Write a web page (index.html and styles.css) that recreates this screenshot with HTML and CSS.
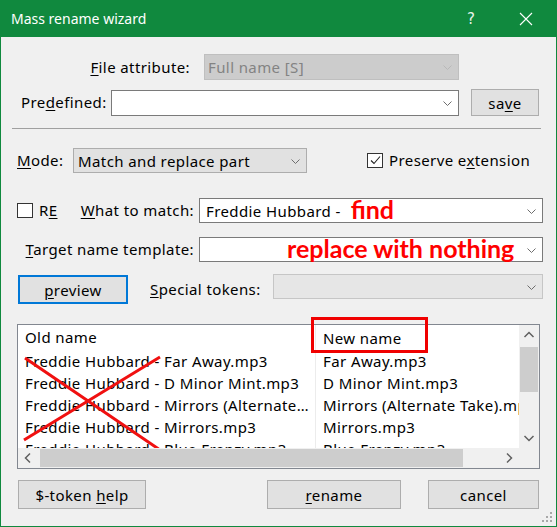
FILE: index.html
```html
<!DOCTYPE html>
<html>
<head>
<meta charset="utf-8">
<link rel="stylesheet" href="styles.css">
</head>
<body>
<div class="window">
  <div class="titlebar">
    <span class="title">Mass rename wizard</span>
    <span class="help">?</span>
    <span class="close"><svg width="14" height="14" viewBox="0 0 14 14"><path d="M1 1 L13 13 M13 1 L1 13" stroke="#fff" stroke-width="1.1" fill="none"/></svg></span>
  </div>

  <div class="row row-file">
    <span class="lbl lbl-file"><u>F</u>ile attribute:</span>
    <div class="combo combo-disabled w-file"><span class="ctext">Full name [S]</span><svg class="chev" width="9" height="5" viewBox="0 0 9 5"><path d="M0.5 0.5 L4.5 4.5 L8.5 0.5" fill="none" stroke="#b8b8b8"/></svg></div>
  </div>

  <div class="row row-pre">
    <span class="lbl lbl-pre">Pre<u>d</u>efined:</span>
    <div class="combo combo-edit w-pre"><span class="ctext"></span><svg class="chev" width="9" height="5" viewBox="0 0 9 5"><path d="M0.5 0.5 L4.5 4.5 L8.5 0.5" fill="none" stroke="#6d6d6d"/></svg></div>
    <div class="btn btn-save"><span>sa<u>v</u>e</span></div>
  </div>

  <div class="sep"></div>

  <div class="row row-mode">
    <span class="lbl lbl-mode"><u>M</u>ode:</span>
    <div class="combo combo-list w-mode"><span class="ctext">Match and replace part</span><svg class="chev" width="9" height="5" viewBox="0 0 9 5"><path d="M0.5 0.5 L4.5 4.5 L8.5 0.5" fill="none" stroke="#6d6d6d"/></svg></div>
    <span class="check check-pres"><svg width="13" height="13" viewBox="0 0 13 13"><path d="M2 6.5 L5 9.5 L11 2.5" fill="none" stroke="#222" stroke-width="1.1"/></svg></span>
    <span class="lbl lbl-pres">Preserve e<u>x</u>tension</span>
  </div>

  <div class="row row-match">
    <span class="check check-re"></span>
    <span class="lbl lbl-re">R<u>E</u></span>
    <span class="lbl lbl-what"><u>W</u>hat to match:</span>
    <div class="combo combo-edit w-long"><span class="ctext">Freddie Hubbard -</span><span class="note note-find">find</span><svg class="chev" width="9" height="5" viewBox="0 0 9 5"><path d="M0.5 0.5 L4.5 4.5 L8.5 0.5" fill="none" stroke="#6d6d6d"/></svg></div>
  </div>

  <div class="row row-target">
    <span class="lbl lbl-target"><u>T</u>arget name template:</span>
    <div class="combo combo-edit w-long"><span class="note note-replace">replace with nothing</span><svg class="chev" width="9" height="5" viewBox="0 0 9 5"><path d="M0.5 0.5 L4.5 4.5 L8.5 0.5" fill="none" stroke="#6d6d6d"/></svg></div>
  </div>

  <div class="row row-preview">
    <div class="btn btn-preview"><span><u>p</u>review</span></div>
    <span class="lbl lbl-special"><u>S</u>pecial tokens:</span>
    <div class="combo combo-off w-special"><span class="ctext"></span><svg class="chev" width="9" height="5" viewBox="0 0 9 5"><path d="M0.5 0.5 L4.5 4.5 L8.5 0.5" fill="none" stroke="#6d6d6d"/></svg></div>
  </div>

  <div class="list">
    <div class="list-content">
      <div class="lrow lhead"><span class="c1">Old name</span><span class="c2">New name</span></div>
      <div class="lrow"><span class="c1">Freddie Hubbard - Far Away.mp3</span><span class="c2">Far Away.mp3</span></div>
      <div class="lrow"><span class="c1">Freddie Hubbard - D Minor Mint.mp3</span><span class="c2">D Minor Mint.mp3</span></div>
      <div class="lrow"><span class="c1">Freddie Hubbard - Mirrors (Alternate Take).mp3</span><span class="c2">Mirrors (Alternate Take).mp3</span></div>
      <div class="lrow"><span class="c1">Freddie Hubbard - Mirrors.mp3</span><span class="c2">Mirrors.mp3</span></div>
      <div class="lrow"><span class="c1">Freddie Hubbard - Blue Frenzy.mp3</span><span class="c2">Blue Frenzy.mp3</span></div>
      <svg class="xmark" width="160" height="130" viewBox="0 0 160 130"><path d="M7 33 L145 127 M142 32 L6 115" stroke="#f01010" stroke-width="3" fill="none"/></svg>
    </div>
    <div class="vscroll">
      <svg class="arr" width="20" height="20" viewBox="0 0 20 20"><path d="M5.5 12 L10 7.5 L14.5 12" fill="none" stroke="#606060" stroke-width="1.5"/></svg>
      <div class="vtrack"><div class="vthumb"></div></div>
      <svg class="arr" width="20" height="20" viewBox="0 0 20 20"><path d="M5.5 8 L10 12.5 L14.5 8" fill="none" stroke="#606060" stroke-width="1.5"/></svg>
    </div>
    <div class="hscroll">
      <svg class="arr" width="20" height="20" viewBox="0 0 20 20"><path d="M12 5.5 L7.5 10 L12 14.5" fill="none" stroke="#606060" stroke-width="1.5"/></svg>
      <div class="htrack"><div class="hthumb"></div></div>
      <svg class="arr" width="20" height="20" viewBox="0 0 20 20"><path d="M8 5.5 L12.5 10 L8 14.5" fill="none" stroke="#606060" stroke-width="1.5"/></svg>
    </div>
    <div class="corner"></div>
    <div class="newname-box"></div>
  </div>

  <div class="row row-buttons">
    <div class="btn btn-help"><span>$-token <u>h</u>elp</span></div>
    <div class="btn btn-rename"><span><u>r</u>ename</span></div>
    <div class="btn btn-cancel"><span>cancel</span></div>
  </div>

  <svg class="grip" width="11" height="11" viewBox="0 0 11 11"><g fill="#a8a8a8"><rect x="8" y="0" width="2" height="2"/><rect x="4" y="4" width="2" height="2"/><rect x="8" y="4" width="2" height="2"/><rect x="0" y="8" width="2" height="2"/><rect x="4" y="8" width="2" height="2"/><rect x="8" y="8" width="2" height="2"/></g></svg>
</div>
</body>
</html>
```

FILE: styles.css
```css
* { box-sizing: border-box; }
html, body { margin: 0; padding: 0; }
body {
  font-family: "Noto Sans", "Open Sans", sans-serif;
  font-size: 15px;
  letter-spacing: 0.4px;
  color: #000;
  background: #f0f0f0;
}
u { text-decoration: underline; text-underline-offset: 2px; text-decoration-thickness: 1px; }

.window {
  position: relative;
  width: 557px;
  height: 527px;
  background: #f0f0f0;
  border: 1px solid #10893e;
  border-top: none;
}

.titlebar {
  height: 37px;
  margin: 0 -1px;
  background: #10893e;
  color: #fff;
  display: flex;
  align-items: center;
  padding-left: 11px;
  letter-spacing: 0;
}
.title { flex: 1; line-height: 1; font-size: 14px; }
.help { font-family: "DejaVu Sans", sans-serif; font-size: 15px; width: 16px; margin-right: 36px; color: #e8f3ec; }
.close { width: 14px; margin-right: 24px; display: flex; }

.row { display: flex; align-items: center; }
.lbl { white-space: nowrap; line-height: 1; }

.combo {
  position: relative;
  display: flex;
  align-items: center;
  height: 26px;
  border: 1px solid #7a7a7a;
  background: #fff;
  white-space: nowrap;
}
.combo .ctext { padding-left: 6px; }
.combo .chev { position: absolute; right: 6px; top: 50%; margin-top: -2px; }
.combo-disabled { background: #cccccc; border-color: #bfbfbf; color: #838383; }
.combo-disabled .ctext { padding-left: 3px; }
.combo-list { background: #e1e1e1; border-color: #adadad; height: 25px; }
.combo-list .ctext { padding-left: 4px; }
.combo-off { background: #e6e6e6; border-color: #c6c6c6; height: 25px; }

.btn {
  display: flex;
  align-items: center;
  justify-content: center;
  background: #e1e1e1;
  border: 1px solid #adadad;
  height: 29px;
  white-space: nowrap;
}

.check {
  display: inline-flex;
  align-items: center;
  justify-content: center;
  width: 16px;
  height: 15px;
  border: 1px solid #333;
  background: #fff;
}

/* file attribute row */
.row-file { margin-top: 17px; height: 26px; }
.lbl-file { width: 189px; text-align: right; }
.w-file { width: 255px; margin-left: 14px; }

/* predefined row */
.row-pre { margin-top: 9px; height: 27px; align-items: flex-end; }
.lbl-pre { margin-left: 20px; width: 90px; align-self: center; }
.w-pre { width: 348px; }
.btn-save { width: 68px; height: 27px; margin-left: 12px; }

.sep { margin: 12px 0 0 11px; width: 529px; height: 1px; background: #a0a0a0; }

/* mode row */
.row-mode { margin-top: 19px; height: 25px; }
.lbl-mode { margin-left: 16px; width: 56px; }
.w-mode { width: 234px; }
.check-pres { margin-left: 60px; }
.lbl-pres { margin-left: 6px; }

/* match row */
.row-match { margin-top: 25px; height: 25px; }
.check-re { margin-left: 16px; }
.lbl-re { margin-left: 6px; width: 38px; }
.lbl-what { width: 122px; text-align: right; padding-right: 5px; }
.w-long { width: 344px; height: 25px; }

.note { color: #ff0000; font-family: Lato, "Noto Sans", sans-serif; font-weight: 700; font-size: 25px; line-height: 1; letter-spacing: 0; }
.note-find { margin-left: 10px; margin-top: -3px; }
.note-replace { margin-left: 87px; margin-top: -3px; }

/* target row */
.row-target { margin-top: 14px; height: 25px; }
.lbl-target { width: 198px; text-align: right; padding-right: 5px; }

/* preview row */
.row-preview { margin-top: 12px; height: 30px; }
.btn-preview { margin-left: 17px; width: 110px; height: 29px; border: 2px solid #0078d7; align-self: flex-end; }
.lbl-special { margin-left: 22px; width: 123px; }
.w-special { width: 270px; align-self: flex-start; }

/* list */
.list {
  position: relative;
  margin: 20px 0 0 16px;
  width: 523px;
  height: 145px;
  border: 1px solid #828790;
  background: #fff;
  display: grid;
  grid-template-columns: 1fr 20px;
  grid-template-rows: 1fr 20px;
}
.list-content { position: relative; overflow: hidden; }
.lrow { display: flex; height: 22px; align-items: center; white-space: nowrap; }
.lhead { height: 25px; }
.c1 { width: 298px; flex: none; padding-left: 7px; padding-right: 6px; overflow: hidden; text-overflow: ellipsis; border-right: 1px solid #ececec; height: 100%; display: block; line-height: 22px; }
.lhead .c1 { line-height: 25px; }
.c2 { padding-left: 7px; }
.xmark { position: absolute; left: 0; top: 0; }

.vscroll { background: #f0f0f0; display: flex; flex-direction: column; }
.vtrack { flex: 1; padding-top: 2px; }
.vthumb { height: 45px; background: #cdcdcd; margin: 0 1px; }
.hscroll { background: #f0f0f0; display: flex; }
.htrack { flex: 1; padding-left: 2px; padding-right: 36px; }
.hthumb { background: #cdcdcd; margin: 1px 0; height: 18px; }
.corner { background: #f0f0f0; }
.arr { flex: none; }

.newname-box {
  position: absolute;
  left: 293px;
  top: -8px;
  width: 117px;
  height: 36px;
  border: 3px solid #f00000;
}

/* bottom buttons */
.row-buttons { margin-top: 11px; height: 29px; }
.btn-help { margin-left: 17px; width: 128px; }
.btn-rename { margin-left: 121px; width: 134px; }
.btn-cancel { margin-left: 27px; width: 111px; }

.grip { position: absolute; right: 3px; bottom: 3px; }
```
